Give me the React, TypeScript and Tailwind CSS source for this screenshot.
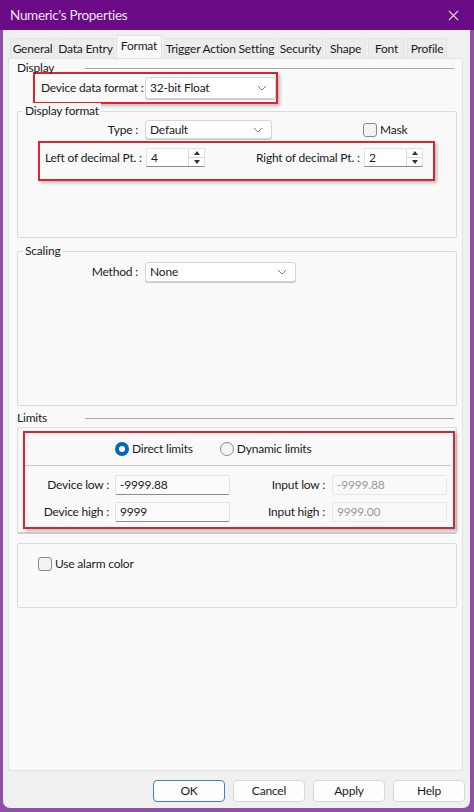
import { X } from "lucide-react";

const tabs = [
  { name: "General", w: "w-[45px]" },
  { name: "Data Entry", w: "w-[57px]" },
  { name: "Format", w: "w-[46px]", active: true },
  { name: "Trigger Action Setting", w: "w-[112px]" },
  { name: "Security", w: "w-[45px]" },
  { name: "Shape", w: "w-[41px]" },
  { name: "Font", w: "w-[37px]" },
  { name: "Profile", w: "w-[40px]" },
];

const Chevron = () => (
  <svg width="10" height="6" viewBox="0 0 10 6" className="shrink-0">
    <path d="M1 1l4 4 4-4" fill="none" stroke="#7a7a7a" strokeWidth="1" />
  </svg>
);

const Select = ({ value, w, h }: { value: string; w: string; h: string }) => (
  <div className={`${w} ${h} flex items-center justify-between bg-white border border-[#d6d6d6] rounded-[3px] pl-[4px] pr-[8px] shadow-[0_1px_0_#c8c8c8]`}>
    <span>{value}</span>
    <Chevron />
  </div>
);

const Spin = ({ value }: { value: string }) => (
  <div className="w-[59px] h-[19px] flex bg-white border border-[#e2e2e2] border-b-[#8c8c8c]">
    <span className="flex-1 pl-[4px] leading-[18px]">{value}</span>
    <div className="w-[16px] flex flex-col border-l border-[#d8d8d8]">
      <div className="flex-1 flex items-center justify-center border-b border-[#d8d8d8]">
        <svg width="6" height="4" viewBox="0 0 6 4"><path d="M0 4L3 0L6 4Z" fill="#333" /></svg>
      </div>
      <div className="flex-1 flex items-center justify-center">
        <svg width="6" height="4" viewBox="0 0 6 4"><path d="M0 0L3 4L6 0Z" fill="#333" /></svg>
      </div>
    </div>
  </div>
);

const Field = ({ value, disabled }: { value: string; disabled?: boolean }) =>
  disabled ? (
    <div className="w-[115px] h-[20px] flex items-center pl-[4px] bg-[#f9f9f9] border border-[#e6e6e6] rounded-[2px] text-[#9a9a9a]">
      {value}
    </div>
  ) : (
    <div className="w-[115px] h-[20px] flex items-center pl-[4px] bg-[#fbfbfb] border border-[#e2e2e2] border-b-[#8c8c8c] rounded-[2px]">
      {value}
    </div>
  );

const Checkbox = () => (
  <div className="w-[14px] h-[14px] rounded-[3px] border border-[#8a8a8a] bg-[#f3f3f3] shrink-0" />
);

const Radio = ({ checked }: { checked?: boolean }) =>
  checked ? (
    <div className="w-[14px] h-[14px] rounded-full bg-[#0067c0] flex items-center justify-center shrink-0">
      <div className="w-[6px] h-[6px] rounded-full bg-white" />
    </div>
  ) : (
    <div className="w-[14px] h-[14px] rounded-full border border-[#8a8a8a] bg-[#f5f5f5] shrink-0" />
  );

const Group = ({ label, h, className = "", children }: { label?: string; h: string; className?: string; children?: React.ReactNode }) => (
  <div className={`relative ${h} w-[440px] border border-[#dcdcdc] rounded-[2px] ${className}`}>
    {label && (
      <span className="absolute left-[5px] top-[-9px] px-[2px] bg-[#f9f9f9] leading-[16px]">{label}</span>
    )}
    {children}
  </div>
);

const Header = ({ label }: { label: string }) => (
  <div className="flex items-center h-[14px] w-[440px]">
    <span className="w-[51px] leading-[14px]">{label}</span>
    <div className="flex-1 ml-[17px] mr-[3px] h-px bg-[#a8a8a8]" />
  </div>
);

const redBox = "border-2 border-[#d7262e] shadow-[2px_2px_3px_rgba(0,0,0,0.25)]";

export default function App() {
  return (
    <div className="w-[474px] h-[812px] bg-[#8d4fa8] overflow-hidden whitespace-nowrap font-['Lato',sans-serif] text-[12px] tracking-[-0.2px] text-[#1b1b1b]">
      {/* title bar */}
      <div className="h-[30px] bg-[#6b0a85] flex items-center justify-between pl-[10px] pr-[12px]">
        <span className="text-[13.5px] tracking-[-0.3px] text-[#eee2f3]">Numeric's Properties</span>
        <X className="w-[17px] h-[17px] text-[#e6d3ee]" strokeWidth={1.5} />
      </div>

      <div className="ml-[3px] w-[467px] h-[778px] bg-[#f0f0f0] rounded-b-[7px] pt-[5px]">
        {/* tabs */}
        <div className="flex items-end gap-[2px] pl-[7px] h-[23px]">
          {tabs.map((t) =>
            t.active ? (
              <div key={t.name} className={`${t.w} h-[23px] bg-[#f9f9f9] border border-b-0 border-[#e0e0e0] flex items-center justify-center pb-[2px]`}>
                {t.name}
              </div>
            ) : (
              <div key={t.name} className={`${t.w} h-[20px] bg-[#ececec] border border-b-0 border-[#e4e4e4] flex items-center justify-center`}>
                {t.name}
              </div>
            )
          )}
        </div>

        {/* panel */}
        <div className="ml-[5px] w-[455px] h-[713px] bg-[#f9f9f9] border border-[#e2e2e2] pl-[8px] pt-[2px]">
          <Header label="Display" />

          <div className={`mt-[-3px] ml-[16px] w-[245px] h-[32px] flex items-center pl-[6px] ${redBox}`}>
            <span className="w-[104px]">Device data format :</span>
            <Select value="32-bit Float" w="w-[131px]" h="h-[22px]" />
          </div>

          <Group label="Display format" h="h-[127px]" className="mt-[7px]">
            <div className="flex items-center mt-[8px]">
              <span className="w-[120px] text-right">Type :</span>
              <div className="ml-[7px]">
                <Select value="Default" w="w-[127px]" h="h-[19px]" />
              </div>
              <div className="ml-[91px] flex items-center gap-[3px]">
                <Checkbox />
                <span>Mask</span>
              </div>
            </div>
            <div className={`mt-[2px] ml-[20px] w-[397px] h-[40px] flex items-start pt-[5px] pl-[5px] ${redBox}`}>
              <span className="w-[101px] leading-[19px]">Left of decimal Pt. :</span>
              <Spin value="4" />
              <span className="ml-[51px] w-[108px] leading-[19px]">Right of decimal Pt. :</span>
              <Spin value="2" />
            </div>
          </Group>

          <Group label="Scaling" h="h-[155px]" className="mt-[13px]">
            <div className="flex items-center mt-[10px]">
              <span className="w-[120px] text-right">Method :</span>
              <div className="ml-[7px]">
                <Select value="None" w="w-[151px]" h="h-[20px]" />
              </div>
            </div>
          </Group>

          <div className="mt-[5px]">
            <Header label="Limits" />
          </div>

          <Group h="h-[107px]" className="mt-[2px] border-b-[#cfcfcf] border-b-2">
            <div className={`mt-[3px] ml-[5px] w-[432px] h-[98px] ${redBox}`}>
              <div className="h-[32px] flex items-center pl-[90px]">
                <Radio checked />
                <span className="ml-[3px]">Direct limits</span>
                <div className="ml-[27px]">
                  <Radio />
                </div>
                <span className="ml-[3px]">Dynamic limits</span>
              </div>
              <div className="h-px bg-[#c6c6c6] mr-[2px]" />
              <div className="flex items-center mt-[9px]">
                <span className="w-[84px] text-right">Device low :</span>
                <div className="ml-[6px]"><Field value="-9999.88" /></div>
                <span className="w-[95px] text-right">Input low :</span>
                <div className="ml-[7px]"><Field value="-9999.88" disabled /></div>
              </div>
              <div className="flex items-center mt-[7px]">
                <span className="w-[84px] text-right">Device high :</span>
                <div className="ml-[6px]"><Field value="9999" /></div>
                <span className="w-[95px] text-right">Input high :</span>
                <div className="ml-[7px]"><Field value="9999.00" disabled /></div>
              </div>
            </div>
          </Group>

          <Group h="h-[65px]" className="mt-[9px]">
            <div className="flex items-center gap-[3px] mt-[11px] ml-[20px]">
              <Checkbox />
              <span>Use alarm color</span>
            </div>
          </Group>
        </div>

        {/* buttons */}
        <div className="flex justify-end gap-[8px] pr-[5px] mt-[9px]">
          {["OK", "Cancel", "Apply", "Help"].map((b) => (
            <div
              key={b}
              className={`w-[72px] h-[22px] flex items-center justify-center bg-[#fdfdfd] rounded-[4px] border ${
                b === "OK" ? "border-[#3c82cc]" : "border-[#d6d6d6]"
              }`}
            >
              {b}
            </div>
          ))}
        </div>
      </div>
    </div>
  );
}
